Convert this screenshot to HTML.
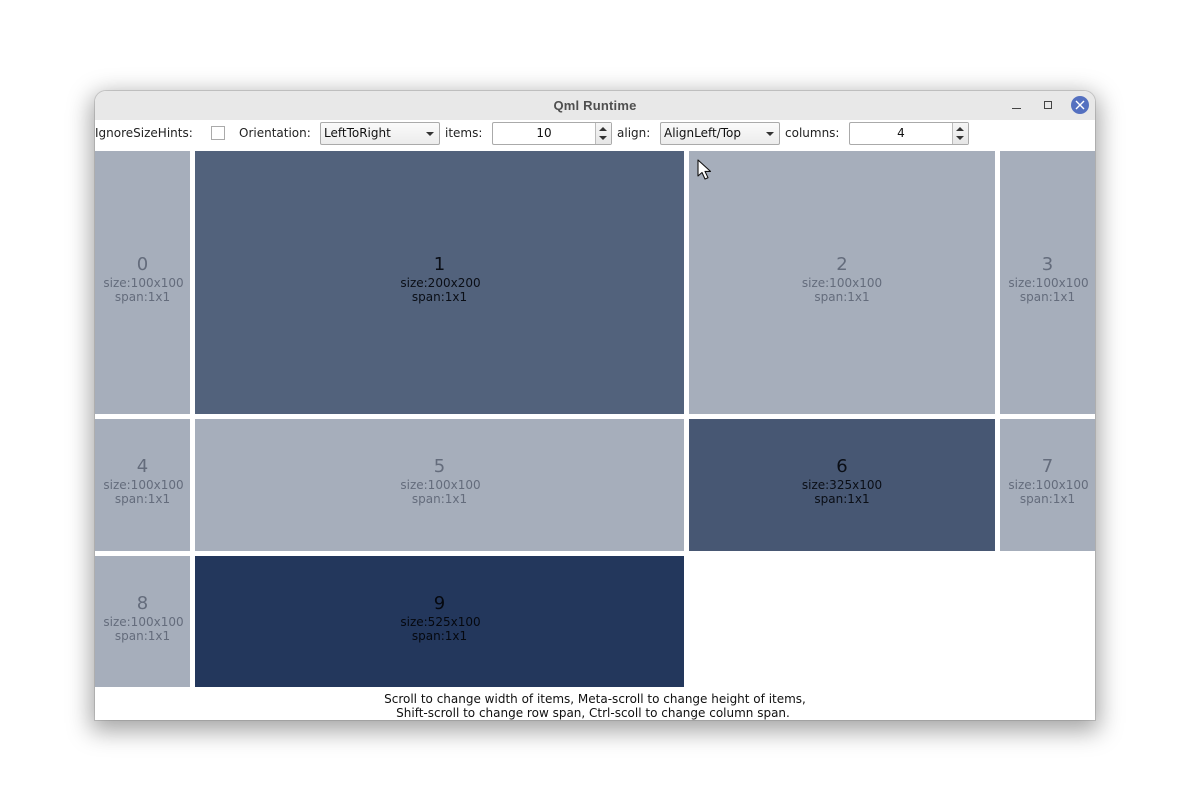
<!DOCTYPE html>
<html><head><meta charset="utf-8">
<style>
html,body{margin:0;padding:0;width:1200px;height:800px;background:#fff;overflow:hidden}
body{position:relative;font-family:"DejaVu Sans","Liberation Sans",sans-serif;font-size:12px;color:#111}
.abs{position:absolute}
#win{left:95px;top:91px;width:1000px;height:629px;background:#fff;border-radius:11px 11px 0 0;box-shadow:0 0 0 1px rgba(120,120,120,.3),0 7px 24px 4px rgba(0,0,0,.36)}
#tb{left:95px;top:91px;width:1000px;height:29px;background:#e8e8e8;border-radius:11px 11px 0 0}
#title{left:95px;top:91px;width:1000px;height:29px;text-align:center;font:bold 13px/29px "Liberation Sans",sans-serif;letter-spacing:.2px;color:#4f4f4f}
.lb{position:absolute;top:125px;height:16px;line-height:16px;white-space:nowrap;color:#222;font-size:12px}
.combo{position:absolute;top:122px;width:118px;height:21px;border:1px solid #aaa;border-radius:2px;background:linear-gradient(#fafafa,#ececec);line-height:21px;box-sizing:content-box}
.combo span{position:absolute;left:3px;top:0;color:#111;font-size:12px}
.combo i{position:absolute;right:5px;top:9px;width:0;height:0;border-left:4px solid transparent;border-right:4px solid transparent;border-top:4px solid #333}
.spin{position:absolute;top:122px;width:118px;height:21px;border:1px solid #aaa;border-radius:2px;background:#fff}
.spin b{position:absolute;left:0;width:102px;top:0;text-align:center;font-weight:normal;line-height:21px;color:#111;font-size:12px}
.spin u{position:absolute;left:102px;top:0;width:16px;height:21px;border-left:1px solid #bbb;background:linear-gradient(#f6f6f6,#e6e6e6);box-sizing:border-box}
.spin u:before{content:"";position:absolute;left:3px;top:4px;border-left:4px solid transparent;border-right:4px solid transparent;border-bottom:4px solid #333}
.spin u:after{content:"";position:absolute;left:3px;top:13px;border-left:4px solid transparent;border-right:4px solid transparent;border-top:4px solid #333}
.c{position:absolute;text-align:center;overflow:hidden;display:block}
.c div{position:absolute;left:0;width:100%;white-space:nowrap;text-align:center}
.c.o div.z{left:1px}
.n{font-size:18px;line-height:24px;margin-top:1px}
.s{font-size:12px;line-height:14px}
.lt{background:#a6aebb;color:#646c7c}
#foot{left:95px;top:692px;width:1000px;text-align:center;line-height:14px;color:#111;font-size:12px}
#foot span{position:relative;left:-2px}
</style></head><body>
<div class="abs" id="win"></div>
<div class="abs" id="tb"></div>
<div class="abs" id="title">Qml Runtime</div>
<svg class="abs" style="left:1000px;top:92px" width="96" height="28" viewBox="0 0 96 28">
<path d="M12 16.5h9" stroke="#444" stroke-width="1" fill="none"/>
<rect x="44.5" y="9.5" width="7" height="7" fill="none" stroke="#444" stroke-width="1"/>
<circle cx="80" cy="13" r="9" fill="#5470c0"/>
<path d="M76 9l8 8M84 9l-8 8" stroke="#fff" stroke-width="1.4" fill="none"/>
</svg>

<div class="lb" style="left:95px">IgnoreSizeHints:</div>
<div class="abs" style="left:211px;top:126px;width:12px;height:12px;border:1px solid #aaa;background:#fff"></div>
<div class="lb" style="left:239px">Orientation:</div>
<div class="combo" style="left:320px"><span>LeftToRight</span><i></i></div>
<div class="lb" style="left:445px">items:</div>
<div class="spin" style="left:492px"><b>10</b><u></u></div>
<div class="lb" style="left:617px">align:</div>
<div class="combo" style="left:660px"><span>AlignLeft/Top</span><i></i></div>
<div class="lb" style="left:785px">columns:</div>
<div class="spin" style="left:849px"><b>4</b><u></u></div>

<div class="c lt o" style="left:95px;top:151px;width:95px;height:263px"><div class="n" style="top:101px">0</div><div class="s z" style="top:125px">size:100x100</div><div class="s" style="top:139px">span:1x1</div></div>
<div class="c o" style="left:195px;top:151px;width:489px;height:263px;background:#52627c;color:#0a0e16"><div class="n" style="top:101px">1</div><div class="s z" style="top:125px">size:200x200</div><div class="s" style="top:139px">span:1x1</div></div>
<div class="c lt" style="left:689px;top:151px;width:306px;height:263px"><div class="n" style="top:101px">2</div><div class="s" style="top:125px">size:100x100</div><div class="s" style="top:139px">span:1x1</div></div>
<div class="c lt o" style="left:1000px;top:151px;width:95px;height:263px"><div class="n" style="top:101px">3</div><div class="s z" style="top:125px">size:100x100</div><div class="s" style="top:139px">span:1x1</div></div>

<div class="c lt o" style="left:95px;top:419px;width:95px;height:132px"><div class="n" style="top:35px">4</div><div class="s z" style="top:59px">size:100x100</div><div class="s" style="top:73px">span:1x1</div></div>
<div class="c lt o" style="left:195px;top:419px;width:489px;height:132px"><div class="n" style="top:35px">5</div><div class="s z" style="top:59px">size:100x100</div><div class="s" style="top:73px">span:1x1</div></div>
<div class="c" style="left:689px;top:419px;width:306px;height:132px;background:#475773;color:#0a0e16"><div class="n" style="top:35px">6</div><div class="s" style="top:59px">size:325x100</div><div class="s" style="top:73px">span:1x1</div></div>
<div class="c lt o" style="left:1000px;top:419px;width:95px;height:132px"><div class="n" style="top:35px">7</div><div class="s z" style="top:59px">size:100x100</div><div class="s" style="top:73px">span:1x1</div></div>

<div class="c lt o" style="left:95px;top:556px;width:95px;height:131px"><div class="n" style="top:35px">8</div><div class="s z" style="top:59px">size:100x100</div><div class="s" style="top:73px">span:1x1</div></div>
<div class="c o" style="left:195px;top:556px;width:489px;height:131px;background:#23375c;color:#05080f"><div class="n" style="top:35px">9</div><div class="s z" style="top:59px">size:525x100</div><div class="s" style="top:73px">span:1x1</div></div>

<div class="abs" id="foot">Scroll to change width of items, Meta-scroll to change height of items,<br><span>Shift-scroll to change row span, Ctrl-scoll to change column span.</span></div>

<svg class="abs" style="left:695px;top:158px" width="18" height="24" viewBox="0 0 18 24">
<path d="M3 2v16l4-3.5 3 6.5 3-1.3-3-6.3h5.5z" fill="#fff" stroke="#111" stroke-width="1.1" stroke-linejoin="round"/>
</svg>
</body></html>
